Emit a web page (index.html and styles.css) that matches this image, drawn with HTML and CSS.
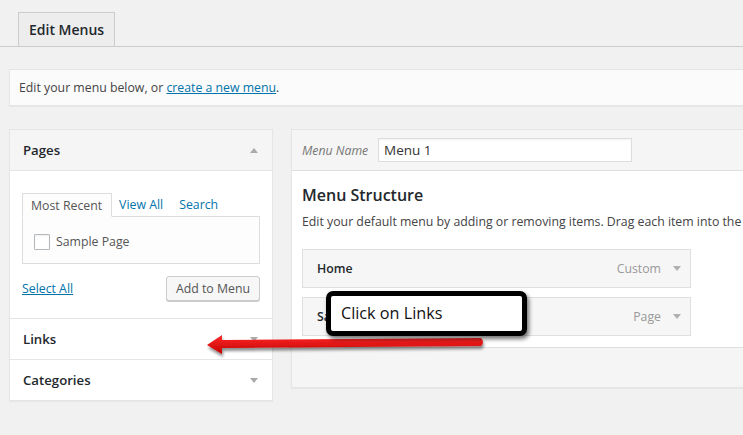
FILE: index.html
```html
<!DOCTYPE html>
<html lang="en">
<head>
  <meta charset="UTF-8">
  <title>Edit Menus</title>
  <link rel="stylesheet" href="styles.css">
</head>
<body>

  <div class="nav-tabs">
    <span class="nav-tab">Edit Menus</span>
  </div>

  <div class="manage-menus">
    Edit your menu below, or <a href="#">create a new menu</a>.
  </div>

  <div class="columns">

    <!-- Left: add items -->
    <div class="accordion">
      <div class="acc-section open">
        <div class="acc-title">Pages <span class="caret up"></span></div>
        <div class="acc-content">
          <div class="tabs">
            <span class="tab active">Most Recent</span>
            <a href="#" class="tab">View All</a>
            <a href="#" class="tab">Search</a>
          </div>
          <div class="tab-panel">
            <label class="check"><span class="box"></span> Sample Page</label>
          </div>
          <div class="actions">
            <a href="#">Select All</a>
            <button class="button">Add to Menu</button>
          </div>
        </div>
      </div>
      <div class="acc-section">
        <div class="acc-title">Links <span class="caret"></span></div>
      </div>
      <div class="acc-section last">
        <div class="acc-title">Categories <span class="caret"></span></div>
      </div>
    </div>

    <!-- Right: menu edit -->
    <div class="menu-edit">
      <div class="menu-header">
        <span class="menu-name-label">Menu Name</span>
        <input type="text" class="menu-name" value="Menu 1">
      </div>
      <div class="menu-body">
        <h3>Menu Structure</h3>
        <p class="desc">Edit your default menu by adding or removing items. Drag each item into the order you prefer.</p>
        <div class="menu-item">
          <span class="item-title">Home</span>
          <span class="item-type">Custom <span class="caret"></span></span>
        </div>
        <div class="menu-item">
          <span class="item-title">Sample Page</span>
          <span class="item-type">Page <span class="caret"></span></span>
        </div>
      </div>
      <div class="menu-footer"></div>
    </div>

  </div>

  <!-- annotation -->
  <svg class="annotation" width="743" height="435" viewBox="0 0 743 435">
    <defs>
      <linearGradient id="red" x1="0" y1="0" x2="0" y2="1">
        <stop offset="0" stop-color="#ff2a2a"/>
        <stop offset="1" stop-color="#c20000"/>
      </linearGradient>
      <filter id="shadow" x="-10%" y="-50%" width="120%" height="200%">
        <feDropShadow dx="1" dy="3" stdDeviation="1.5" flood-color="#000" flood-opacity="0.45"/>
      </filter>
    </defs>
    <path d="M207 345 L222 335 L222 340 L481 338 Q485 342 481 346 L222 348 L222 354 Z" fill="url(#red)" filter="url(#shadow)"/>
  </svg>
  <div class="callout">Click on Links</div>

</body>
</html>
```

FILE: styles.css
```css
* {
  box-sizing: border-box;
}

body {
  margin: 0;
  width: 743px;
  height: 435px;
  overflow: hidden;
  position: relative;
  background: #f1f1f1;
  font-family: "Open Sans", sans-serif;
  font-size: 12.3px;
  color: #444;
}

a {
  color: #0073aa;
}

/* Tabs */
.nav-tabs {
  display: flex;
  padding: 12px 0 0 18px;
  border-bottom: 1px solid #ccc;
}

.nav-tab {
  height: 34px;
  padding: 0 10px;
  line-height: 33px;
  border: 1px solid #ccc;
  border-bottom: none;
  background: #ededed;
  font-size: 14px;
  font-weight: 600;
  color: #23282d;
}

/* Notice */
.manage-menus {
  margin: 22px 0 0 9px;
  width: 760px;
  height: 37px;
  line-height: 35px;
  padding: 0 9px;
  background: #fbfbfb;
  border: 1px solid #e5e5e5;
  box-shadow: 0 1px 1px rgba(0,0,0,0.04);
}

/* Columns */
.columns {
  display: flex;
  align-items: flex-start;
  gap: 18px;
  margin-top: 23px;
  padding-left: 9px;
}

.accordion {
  flex: 0 0 264px;
  background: #fff;
  border: 1px solid #e5e5e5;
  box-shadow: 0 1px 1px rgba(0,0,0,0.04);
}

.acc-section {
  border-bottom: 1px solid #e5e5e5;
}

.acc-section.last {
  border-bottom: none;
}

.acc-title {
  height: 40px;
  line-height: 40px;
  padding: 0 14px 0 13px;
  font-size: 13.2px;
  font-weight: 600;
  color: #23282d;
  display: flex;
  justify-content: space-between;
  align-items: center;
}

.open .acc-title {
  background: #f5f5f5;
  border-bottom: 1px solid #e5e5e5;
  height: 41px;
}

.caret {
  display: inline-block;
  width: 0;
  height: 0;
  border-left: 4px solid transparent;
  border-right: 4px solid transparent;
  border-top: 5px solid #aaa;
}

.caret.up {
  border-top: none;
  border-bottom: 5px solid #aaa;
}

.acc-content {
  padding: 22px 12px 17px 12px;
}

.tabs {
  display: flex;
  height: 24px;
  position: relative;
  z-index: 1;
}

.tab {
  line-height: 23px;
  padding: 0 8px;
  text-decoration: none;
}

.tab.active {
  padding: 0 9px 0 8px;
  margin-right: -1px;
  border: 1px solid #ddd;
  border-bottom: 1px solid #fdfdfd;
  background: #fdfdfd;
  color: #555;
}

.tab-panel {
  margin-top: -1px;
  height: 48px;
  border: 1px solid #ddd;
  background: #fdfdfd;
  padding: 17px 11px 0;
}

.check {
  display: flex;
  align-items: center;
  gap: 6px;
  color: #555;
  line-height: 16px;
}

.box {
  width: 16px;
  height: 16px;
  border: 1px solid #b4b9be;
  border-radius: 1px;
  background: #fff;
  box-shadow: inset 0 1px 2px rgba(0,0,0,0.07);
}

.actions {
  margin-top: 12px;
  display: flex;
  justify-content: space-between;
  align-items: center;
}

.button {
  width: 94px;
  height: 25px;
  padding: 0;
  border: 1px solid #ccc;
  border-radius: 3px;
  background: #f7f7f7;
  box-shadow: 0 1px 0 #ccc;
  font-family: "Open Sans", sans-serif;
  font-size: 12.3px;
  color: #555;
}

/* Menu edit */
.menu-edit {
  flex: 0 0 480px;
  background: #fff;
  border: 1px solid #e5e5e5;
  box-shadow: 0 1px 1px rgba(0,0,0,0.04);
}

.menu-header {
  height: 41px;
  padding: 0 10px;
  background: #f5f5f5;
  border-bottom: 1px solid #dfdfdf;
  display: flex;
  align-items: center;
}

.menu-name-label {
  width: 76px;
  font-size: 12.3px;
  font-style: italic;
  color: #777;
}

.menu-name {
  width: 254px;
  height: 24px;
  padding: 0 5px;
  border: 1px solid #ddd;
  background: #fff;
  font-family: "Open Sans", sans-serif;
  font-size: 13.5px;
  color: #333;
  box-shadow: inset 0 1px 2px rgba(0,0,0,0.05);
}

.menu-body {
  padding: 14px 10px 11px;
}

.menu-body h3 {
  margin: 0;
  font-size: 16px;
  line-height: 20px;
  font-weight: 600;
  color: #23282d;
}

.desc {
  margin: 8px 0 0;
  line-height: 18px;
  white-space: nowrap;
}

.menu-item {
  width: 389px;
  height: 39px;
  margin-top: 9px;
  padding: 0 9px 0 14px;
  background: #f6f6f6;
  border: 1px solid #dfdfdf;
  display: flex;
  justify-content: space-between;
  align-items: center;
}

.desc + .menu-item {
  margin-top: 18px;
}

.item-title {
  font-weight: 600;
  color: #23282d;
}

.item-type {
  color: #999;
  display: flex;
  align-items: center;
  gap: 12px;
}

.item-type .caret {
  border-top-color: #b0b0b0;
}

.menu-footer {
  height: 40px;
  background: #f5f5f5;
  border-top: 1px solid #dfdfdf;
}

/* Annotation */
.annotation {
  position: absolute;
  left: 0;
  top: 0;
}

.callout {
  position: absolute;
  left: 326px;
  top: 291px;
  width: 201px;
  height: 45px;
  padding-left: 10px;
  line-height: 35px;
  background: #fff;
  border: 5px solid #000;
  border-radius: 7px;
  box-shadow: 2px 3px 4px rgba(0,0,0,0.55);
  font-size: 16.2px;
  color: #111;
}
```
